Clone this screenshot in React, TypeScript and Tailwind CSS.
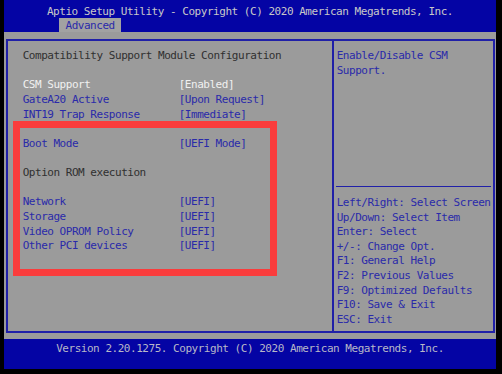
import React from "react";

type Row = { label?: string; value?: string; tone?: "blue" | "white" | "dark" };

const rows: Row[] = [
  { label: "Compatibility Support Module Configuration", tone: "dark" },
  {},
  { label: "CSM Support", value: "[Enabled]", tone: "white" },
  { label: "GateA20 Active", value: "[Upon Request]", tone: "blue" },
  { label: "INT19 Trap Response", value: "[Immediate]", tone: "blue" },
  {},
  { label: "Boot Mode", value: "[UEFI Mode]", tone: "blue" },
  {},
  { label: "Option ROM execution", tone: "dark" },
  {},
  { label: "Network", value: "[UEFI]", tone: "blue" },
  { label: "Storage", value: "[UEFI]", tone: "blue" },
  { label: "Video OPROM Policy", value: "[UEFI]", tone: "blue" },
  { label: "Other PCI devices", value: "[UEFI]", tone: "blue" },
];

const helpKeys = [
  "Left/Right: Select Screen",
  "Up/Down: Select Item",
  "Enter: Select",
  "+/-: Change Opt.",
  "F1: General Help",
  "F2: Previous Values",
  "F9: Optimized Defaults",
  "F10: Save & Exit",
  "ESC: Exit",
];

const toneClass = {
  blue: "text-[#2a2aaa]",
  white: "text-[#f0f0f0]",
  dark: "text-[#303030]",
};

export default function App() {
  return (
    <div className="relative w-[502px] h-[374px] bg-black overflow-hidden font-['DejaVu_Sans_Mono','Liberation_Mono',monospace] text-[11px] tracking-[-0.47px] leading-[14.63px]">
      <div className="ml-[4px] w-[492px] h-[369px] flex flex-col">
        {/* ================= HEADER ================= */}
        <div className="h-[32px] bg-[#0404a4] flex flex-col">
          <div className="h-[18px] pt-[4.5px] text-center text-[#c8c8c8] whitespace-pre">
            Aptio Setup Utility - Copyright (C) 2020 American Megatrends, Inc.
          </div>
          <div className="flex pl-[55px]">
            <div className="h-[14px] px-[6.5px] bg-[#a2a2a2] text-[#2a2aaa] leading-[16px]">
              Advanced
            </div>
          </div>
        </div>

        {/* ================= BODY ================= */}
        <div className="flex-1 bg-[#9b9b9b] pt-[7px] pl-[2px] pr-[1px] pb-[6px]">
          <div className="h-full border-2 border-[#2020a8] flex">
            <div className="w-[326px] border-r-2 border-[#2020a8] pl-[14.7px] pt-[8.2px]">
              {rows.map((r, i) => (
                <div key={i} className={`grid grid-cols-[156px_1fr] h-[14.63px] whitespace-pre ${r.tone ? toneClass[r.tone] : ""}`}>
                  <span>{r.label ?? ""}</span>
                  <span>{r.value ?? ""}</span>
                </div>
              ))}
            </div>

            <div className="flex-1 flex flex-col pt-[8.2px]">
              <div className="h-[136.8px] pl-[2.7px] text-[#2a2aaa]">
                <div>Enable/Disable CSM</div>
                <div>Support.</div>
              </div>
              <div className="mx-[2px] h-[1.5px] bg-[#2020a8]" />
              <div className="pt-[8.5px] pl-[2.7px] text-[#2a2aaa] whitespace-pre">
                {helpKeys.map((k) => (
                  <div key={k}>{k}</div>
                ))}
              </div>
            </div>
          </div>
        </div>

        {/* ================= FOOTER ================= */}
        <div className="h-[30px] bg-[#0404a4] pt-[2.5px] text-center text-[#b8b8c8] whitespace-pre">
          Version 2.20.1275. Copyright (C) 2020 American Megatrends, Inc.
        </div>
      </div>

      {/* annotation box */}
      <div className="absolute left-[13px] top-[121px] w-[264px] h-[155px] border-[7px] border-[#fa3c3c]" />
    </div>
  );
}
